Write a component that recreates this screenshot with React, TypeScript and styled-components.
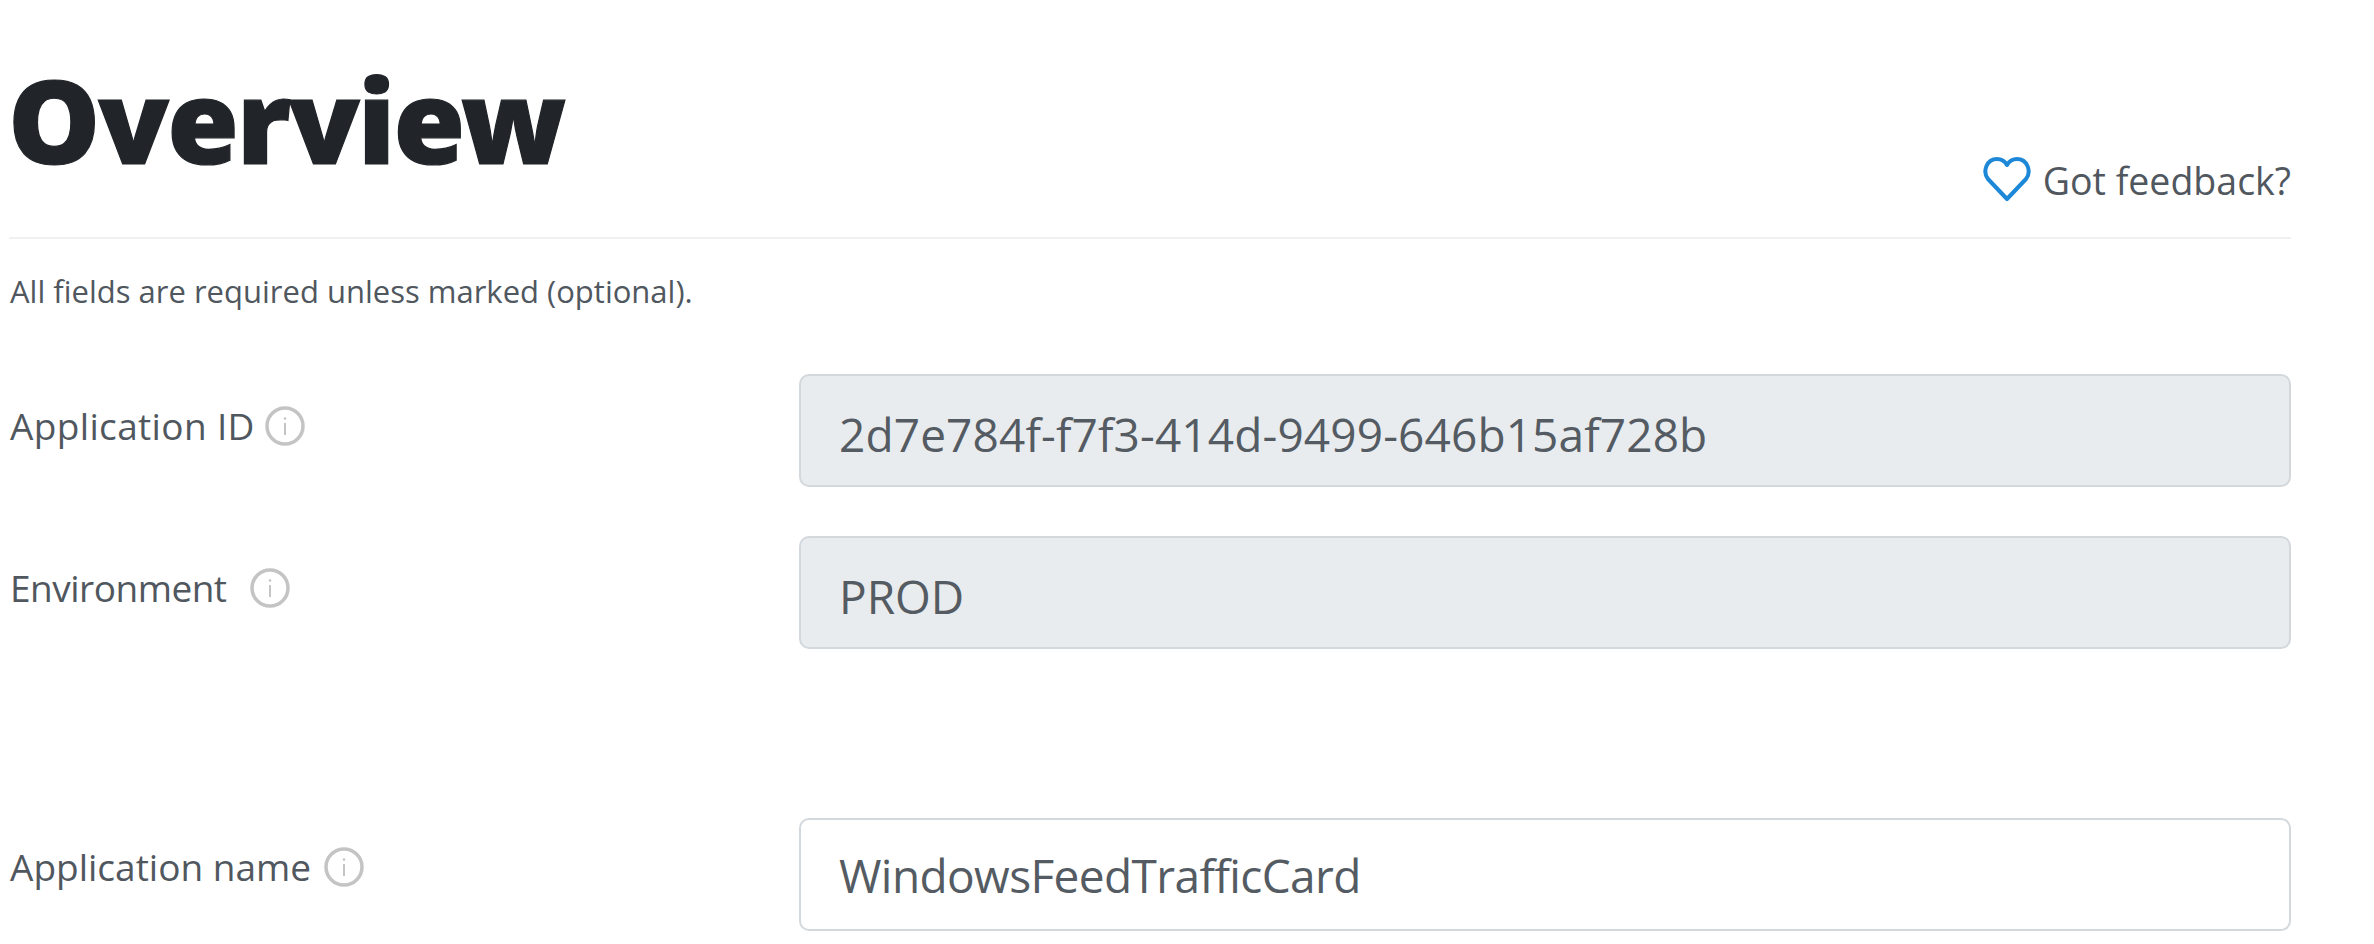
import React from "react";
import styled, { createGlobalStyle } from "styled-components";

const Global = createGlobalStyle`
  html, body { margin: 0; padding: 0; background: #fff; }
  body { font-family: "Open Sans", "Noto Sans", sans-serif; color: #495057; }
`;

const Page = styled.main`
  width: 2374px;
  height: 944px;
  box-sizing: border-box;
  padding: 0 83px 0 9px;
  overflow: hidden;
`;

const Header = styled.header`
  display: flex;
  justify-content: space-between;
  align-items: flex-end;
  height: 239px;
  box-sizing: border-box;
  border-bottom: 2px solid #eff0f1;
`;

const Title = styled.h1`
  margin: 0 0 48px -1px;
  font-family: "Noto Sans", "Open Sans", sans-serif;
  font-size: 116px;
  line-height: 140px;
  font-weight: 900;
  color: #212529;
  letter-spacing: -2.1px;
  -webkit-text-stroke: 1.2px #212529;
`;

const Feedback = styled.a`
  display: flex;
  align-items: center;
  gap: 12px;
  margin-bottom: 31px;
  font-size: 37.5px;
  line-height: 50px;
  color: #50575e;
`;

const Heart = styled.svg`
  width: 48px;
  height: 46px;
  margin-top: -5px;
  flex: none;
`;

const Note = styled.p`
  margin: 32px 0 63px 1px;
  font-size: 31px;
  line-height: 40px;
  color: #50575e;
`;

const Row = styled.div<{ $gap: number }>`
  display: grid;
  grid-template-columns: 790px 1fr;
  margin-bottom: ${(p) => p.$gap}px;
`;

const Label = styled.label<{ $height: number; $tracking: number }>`
  display: flex;
  align-items: center;
  height: ${(p) => p.$height}px;
  padding-left: 1px;
  font-size: 37px;
  letter-spacing: ${(p) => p.$tracking}px;
  color: #50575e;
`;

const Info = styled.svg<{ $gap: number }>`
  width: 40px;
  height: 40px;
  margin-left: ${(p) => p.$gap}px;
  flex: none;
`;

const Field = styled.input<{ $top: number; $tracking: number }>`
  box-sizing: border-box;
  width: 100%;
  height: 113px;
  padding: ${(p) => p.$top}px 38px 0;
  border: 2px solid #d3d8dd;
  border-radius: 10px;
  font: 400 46px "Open Sans", sans-serif;
  letter-spacing: ${(p) => p.$tracking}px;
  color: #545b62;
  outline: none;
  background: #fff;
  opacity: 1;
  &:disabled { background: #e9ecef; -webkit-text-fill-color: #545b62; }
`;

function InfoIcon({ gap }: { gap: number }) {
  return (
    <Info $gap={gap} viewBox="0 0 40 40" fill="none" stroke="#c4c4c4">
      <circle cx="20" cy="20" r="18" strokeWidth="3.5" />
      <path d="M20 17v12" strokeWidth="2" />
      <circle cx="20" cy="12.500" r="1.300" fill="#c4c4c4" stroke="none" />
    </Info>
  );
}

export default function App() {
  return (
    <Page>
      <Global />
      <Header>
        <Title>Overview</Title>
        <Feedback>
          <Heart viewBox="0 0 48 46" fill="none" stroke="#1e88d8" strokeWidth="4" strokeLinejoin="round">
            <path d="M24 43 5 23C-1 15 4 3 14 3c4.500 0 8 2.500 10 6 2-3.500 5.500-6 10-6 10 0 15 12 9 20Z" />
          </Heart>
          Got feedback?
        </Feedback>
      </Header>
      <Note>All fields are required unless marked (optional).</Note>
      <Row $gap={49}>
        <Label $height={103} $tracking={0.35}>Application ID<InfoIcon gap={10} /></Label>
        <Field disabled value="2d7e784f-f7f3-414d-9499-646b15af728b" readOnly $top={6} $tracking={0.13} />
      </Row>
      <Row $gap={169}>
        <Label $height={103} $tracking={-0.5}>Environment<InfoIcon gap={23} /></Label>
        <Field disabled value="PROD" readOnly $top={7} $tracking={0} />
      </Row>
      <Row $gap={0}>
        <Label $height={97} $tracking={0}>Application name<InfoIcon gap={13} /></Label>
        <Field value="WindowsFeedTrafficCard" readOnly $top={1} $tracking={-0.6} />
      </Row>
    </Page>
  );
}
